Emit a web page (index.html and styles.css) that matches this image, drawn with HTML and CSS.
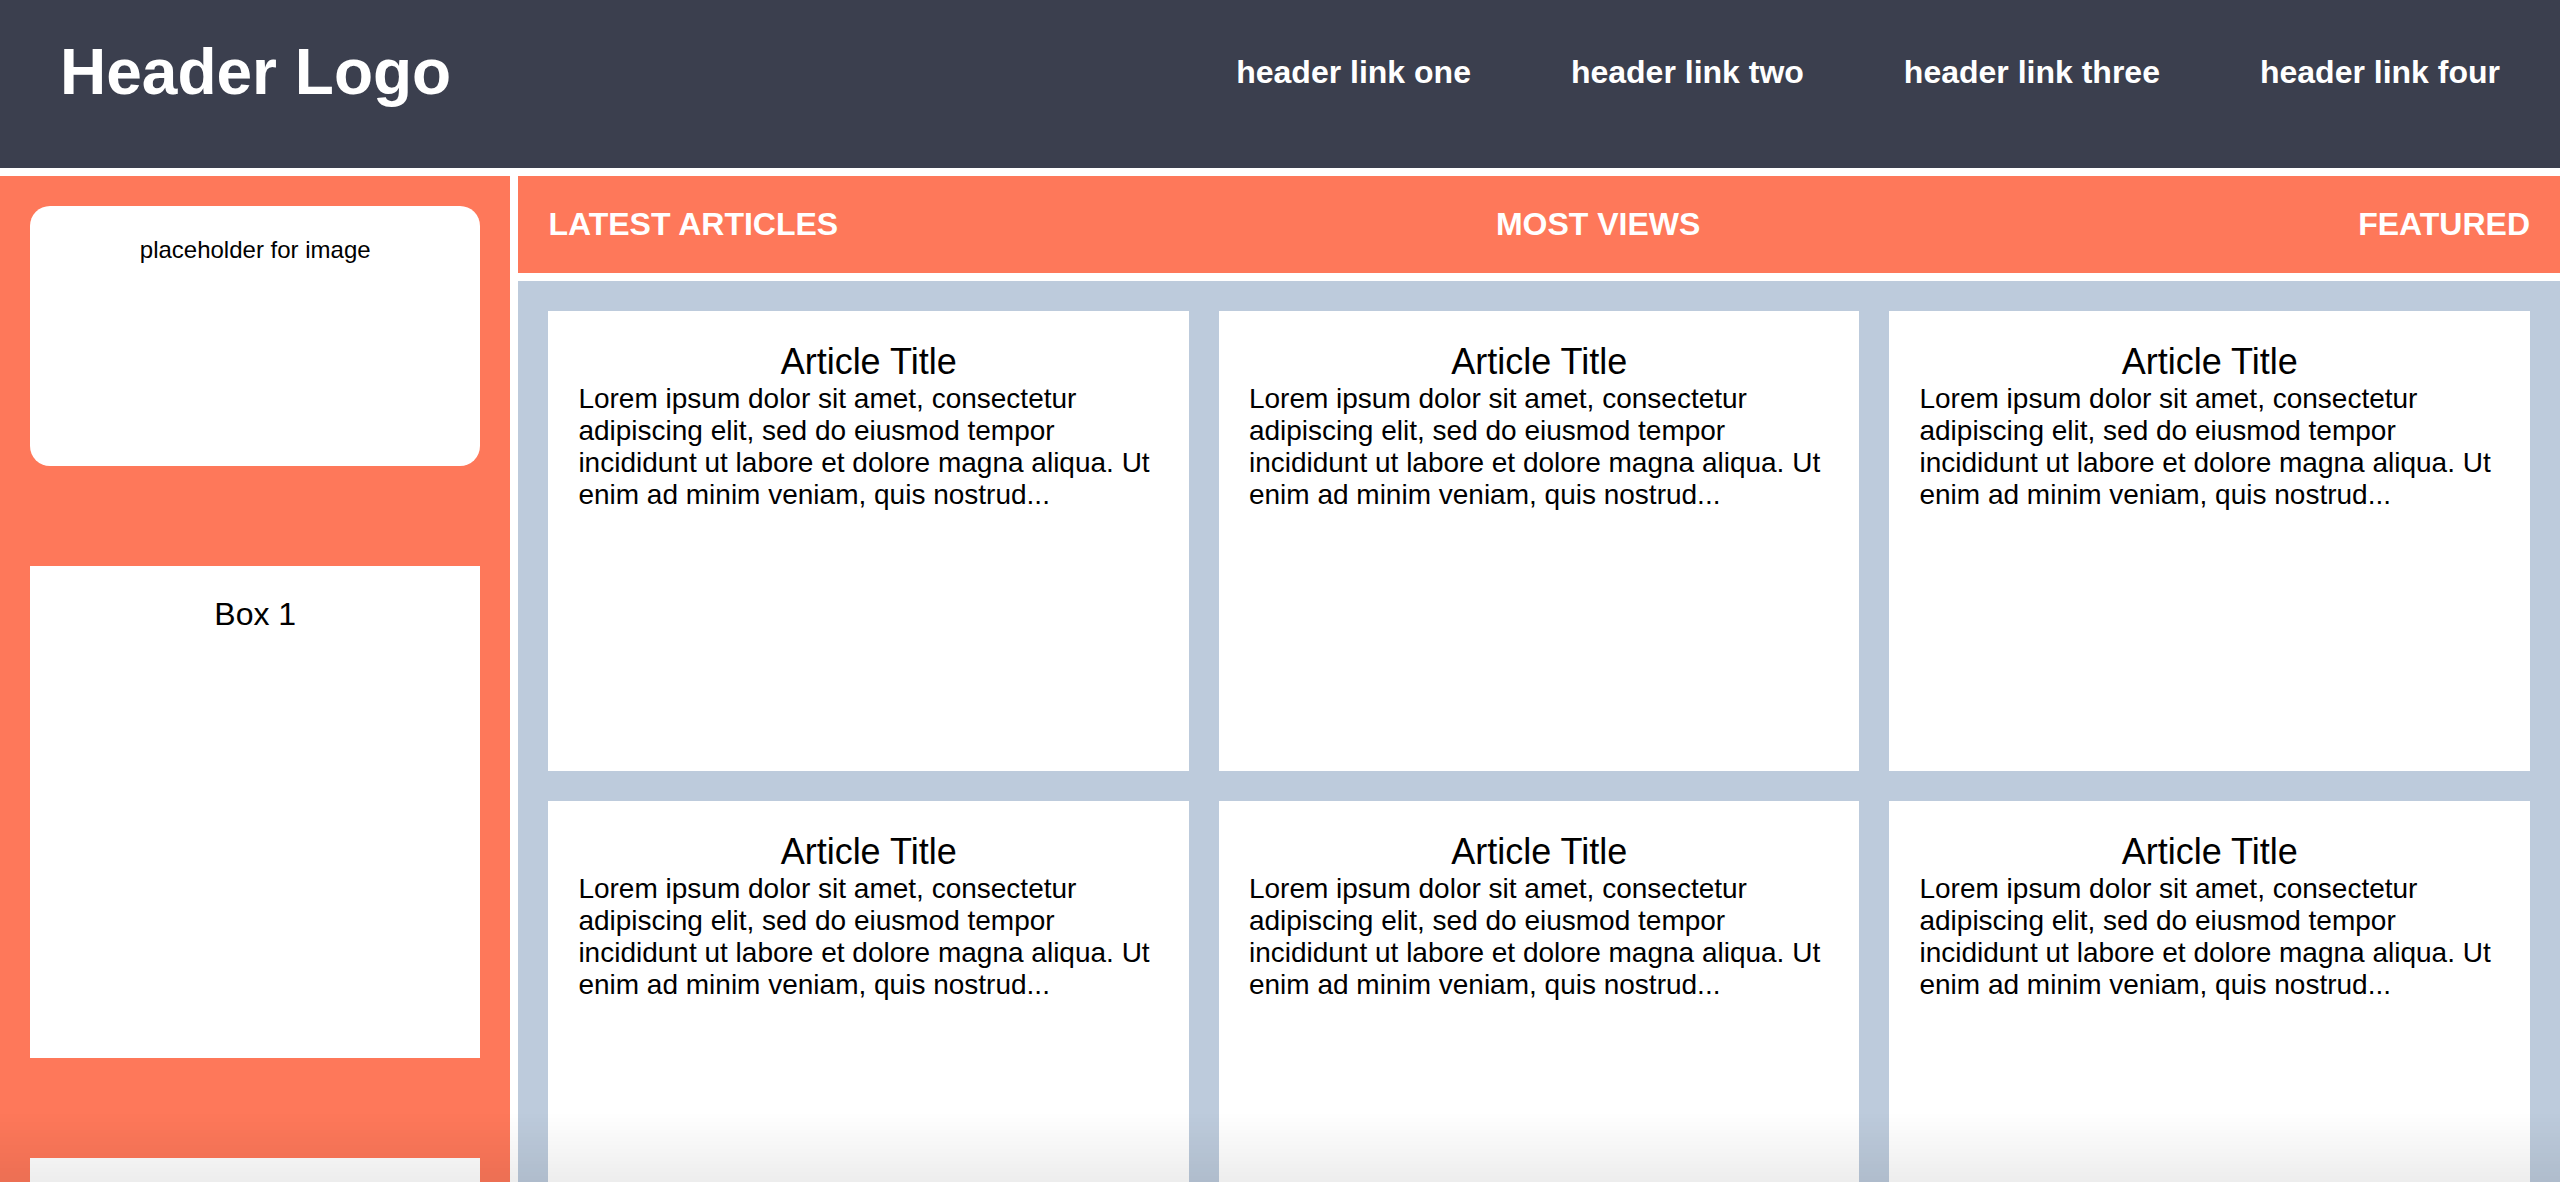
FILE: index.html
```html
<!DOCTYPE html>
<html lang="en">
<head>
<meta charset="utf-8">
<title>Grid Layout</title>
<link rel="stylesheet" href="styles.css">
</head>
<body>
<div class="page">
  <header class="site-header">
    <h1 class="logo">Header Logo</h1>
    <nav class="nav">
      <a href="#">header link one</a>
      <a href="#">header link two</a>
      <a href="#">header link three</a>
      <a href="#">header link four</a>
    </nav>
  </header>
  <aside class="sidebar">
    <div class="side-box image-box">placeholder for image</div>
    <div class="side-box box-lg">Box 1</div>
    <div class="side-box box-lg">Box 2</div>
  </aside>
  <main class="main">
    <div class="tabs">
      <span>LATEST ARTICLES</span>
      <span>MOST VIEWS</span>
      <span>FEATURED</span>
    </div>
    <section class="articles">
      <article class="card"><h2 class="card-title">Article Title</h2><p class="card-text">Lorem ipsum dolor sit amet, consectetur adipiscing elit, sed do eiusmod tempor incididunt ut labore et dolore magna aliqua. Ut enim ad minim veniam, quis nostrud...</p></article>
      <article class="card"><h2 class="card-title">Article Title</h2><p class="card-text">Lorem ipsum dolor sit amet, consectetur adipiscing elit, sed do eiusmod tempor incididunt ut labore et dolore magna aliqua. Ut enim ad minim veniam, quis nostrud...</p></article>
      <article class="card"><h2 class="card-title">Article Title</h2><p class="card-text">Lorem ipsum dolor sit amet, consectetur adipiscing elit, sed do eiusmod tempor incididunt ut labore et dolore magna aliqua. Ut enim ad minim veniam, quis nostrud...</p></article>
      <article class="card"><h2 class="card-title">Article Title</h2><p class="card-text">Lorem ipsum dolor sit amet, consectetur adipiscing elit, sed do eiusmod tempor incididunt ut labore et dolore magna aliqua. Ut enim ad minim veniam, quis nostrud...</p></article>
      <article class="card"><h2 class="card-title">Article Title</h2><p class="card-text">Lorem ipsum dolor sit amet, consectetur adipiscing elit, sed do eiusmod tempor incididunt ut labore et dolore magna aliqua. Ut enim ad minim veniam, quis nostrud...</p></article>
      <article class="card"><h2 class="card-title">Article Title</h2><p class="card-text">Lorem ipsum dolor sit amet, consectetur adipiscing elit, sed do eiusmod tempor incididunt ut labore et dolore magna aliqua. Ut enim ad minim veniam, quis nostrud...</p></article>
    </section>
  </main>
</div>
<div class="bottom-shade"></div>
</body>
</html>
```

FILE: styles.css
```css
* {
  box-sizing: border-box;
}

html, body {
  margin: 0;
  padding: 0;
  background: #ffffff;
}

body {
  font-family: "Liberation Sans", Arial, Helvetica, sans-serif;
  color: #000000;
}

.page {
  display: grid;
  grid-template-columns: 1fr 4fr;
  grid-template-areas:
    "header header"
    "sidebar main";
  gap: 8px;
}

.site-header {
  grid-area: header;
  background: #3b3f4e;
  height: 168px;
  padding: 0 60px 24px 60px;
  display: flex;
  align-items: center;
  justify-content: space-between;
}

.logo {
  margin: 0;
  color: #ffffff;
  font-size: 64px;
  font-weight: bold;
  line-height: normal;
}

.nav {
  display: flex;
  gap: 100px;
}

.nav a {
  color: #ffffff;
  text-decoration: none;
  font-size: 32px;
  font-weight: bold;
}

.sidebar {
  grid-area: sidebar;
  background: #fe785a;
  padding: 30px;
  display: flex;
  flex-direction: column;
  gap: 100px;
}

.side-box {
  background: #ffffff;
  padding: 30px;
  text-align: center;
}

.image-box {
  height: 260px;
  border-radius: 20px;
  font-size: 24px;
}

.box-lg {
  height: 492px;
  font-size: 32px;
}

.main {
  grid-area: main;
  display: flex;
  flex-direction: column;
  gap: 8px;
}

.tabs {
  background: #fe785a;
  padding: 30px;
  display: flex;
  justify-content: space-between;
  color: #ffffff;
  font-size: 32px;
  font-weight: bold;
}

.articles {
  background: #bdcbdc;
  padding: 30px;
  display: grid;
  grid-template-columns: repeat(3, 1fr);
  grid-auto-rows: 460px;
  gap: 30px;
}

.card {
  background: #ffffff;
  padding: 30px;
}

.card-title {
  margin: 0;
  font-size: 36px;
  font-weight: normal;
  text-align: center;
}

.card-text {
  margin: 0;
  font-size: 28px;
}

.bottom-shade {
  position: fixed;
  left: 0;
  right: 0;
  bottom: 0;
  height: 70px;
  pointer-events: none;
  background: linear-gradient(to bottom, rgba(0, 0, 0, 0) 0%, rgba(0, 0, 0, 0.07) 100%);
}
```
